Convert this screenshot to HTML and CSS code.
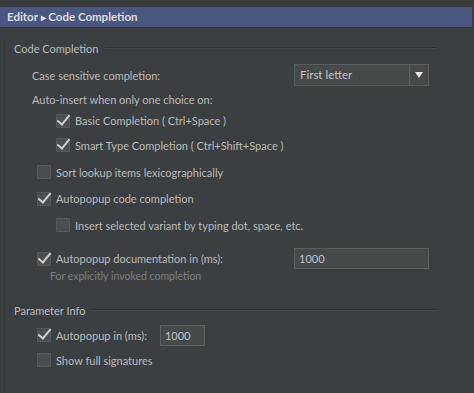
FILE: index.html
```html
<!DOCTYPE html>
<html lang="en">
<head>
  <meta charset="UTF-8" />
  <title>Code Completion</title>
  <link rel="stylesheet" href="styles.css">
</head>
<body>

  <div class="top_gap"></div>
  <div class="header">Editor <span class="crumb">&#9656;</span> Code Completion</div>

  <div class="panel">
    <div class="section_title"><span>Code Completion</span><div class="rule"></div></div>

    <div class="row r_case">
      <div class="label_col">Case sensitive completion:</div>
      <div class="combo">
        <div class="combo_text">First letter</div>
        <div class="combo_btn"><span class="arrow"></span></div>
      </div>
    </div>

    <div class="row r_auto">Auto-insert when only one choice on:</div>

    <div class="row r_basic nested">
      <span class="check on"></span>Basic Completion ( Ctrl+Space )
    </div>
    <div class="row r_smart nested">
      <span class="check on"></span>Smart Type Completion ( Ctrl+Shift+Space )
    </div>

    <div class="row r_sort level1">
      <span class="check"></span>Sort lookup items lexicographically
    </div>
    <div class="row r_pop level1">
      <span class="check on"></span>Autopopup code completion
    </div>
    <div class="row r_insert nested">
      <span class="check"></span>Insert selected variant by typing dot, space, etc.
    </div>

    <div class="row r_doc level1">
      <div class="label_col short"><span class="check on"></span>Autopopup documentation in (ms):</div>
      <div class="field wide">1000</div>
    </div>
    <div class="hint">For explicitly invoked completion</div>

    <div class="section_title second"><span>Parameter Info</span><div class="rule"></div></div>

    <div class="row r_pauto level1">
      <span class="check on"></span>Autopopup in (ms):
      <div class="field small">1000</div>
    </div>
    <div class="row r_show level1">
      <span class="check"></span>Show full signatures
    </div>
  </div>

</body>
</html>
```

FILE: styles.css
```css
body {
  margin: 0;
  padding: 0;
  width: 474px;
  height: 393px;
  overflow: hidden;
  background-color: #3c3f41;
  color: #bbbbbb;
  font-family: Lato, "Open Sans", sans-serif;
  font-size: 11px;
}

.top_gap {
  height: 7px;
  background-color: #393b3d;
}

.header {
  width: 465px;
  height: 20px;
  line-height: 20px;
  padding-left: 7px;
  background-color: #4a5780;
  border-bottom: 1px solid #2f3133;
  color: #dedede;
  font-size: 11.5px;
  font-weight: bold;
}

.crumb {
  font-size: 10px;
}

.panel {
  border-left: 1px solid #363839;
  margin-left: 4px;
  padding-left: 9px;
  height: 365px;
}

.section_title {
  display: flex;
  align-items: center;
  height: 16px;
  margin-top: 12px;
}

.section_title.second {
  margin-top: 20px;
}

.rule {
  width: 0;
  flex: 1;
  margin-left: 7px;
  margin-right: 37px;
  height: 1px;
  background-color: #2e3032;
  border-bottom: 1px solid #46494b;
}

.row {
  display: flex;
  align-items: center;
  height: 26px;
  padding-left: 18px;
}

.row.level1 {
  padding-left: 23px;
}

.row.nested {
  padding-left: 42px;
}

.r_case { margin-top: 6px; }
.r_auto { height: 22px; }
.r_basic { height: 21px; }
.r_smart { height: 28px; }
.r_pop { height: 27px; }
.r_doc { height: 23px; margin-top: 9px; }
.r_pauto { height: 24px; margin-top: 5px; }

.label_col {
  display: flex;
  align-items: center;
  width: 262px;
}

.label_col.short {
  width: 257px;
}

.check {
  display: inline-block;
  position: relative;
  width: 12px;
  height: 12px;
  margin-right: 5px;
  background-color: #4a4e50;
  border: 1px solid #56595b;
  border-radius: 1px;
}

.check.on::after {
  content: "";
  position: absolute;
  left: 3px;
  top: -3px;
  width: 5px;
  height: 11px;
  border-right: 2px solid #cfcfcf;
  border-bottom: 2px solid #cfcfcf;
  transform: rotate(40deg);
}

.combo {
  display: flex;
  width: 133px;
  height: 20px;
  border: 1px solid #5b5e60;
  background-color: #45494a;
}

.combo_text {
  flex: 1;
  padding-left: 5px;
  line-height: 20px;
  font-size: 11.5px;
  color: #c4c4c4;
}

.combo_btn {
  width: 18px;
  border-left: 1px solid #5b5e60;
  display: flex;
  align-items: center;
  justify-content: center;
}

.arrow {
  width: 0;
  height: 0;
  border-left: 4px solid transparent;
  border-right: 4px solid transparent;
  border-top: 6px solid #e4e4e4;
}

.field {
  height: 19px;
  line-height: 19px;
  padding-left: 4px;
  border: 1px solid #5d6062;
  background-color: #45494a;
  color: #c4c4c4;
}

.field.wide {
  width: 129px;
}

.field.small {
  width: 39px;
  margin-left: 13px;
}

.hint {
  padding-left: 36px;
  height: 12px;
  line-height: 12px;
  font-size: 10.5px;
  color: #7d7f81;
}
```
